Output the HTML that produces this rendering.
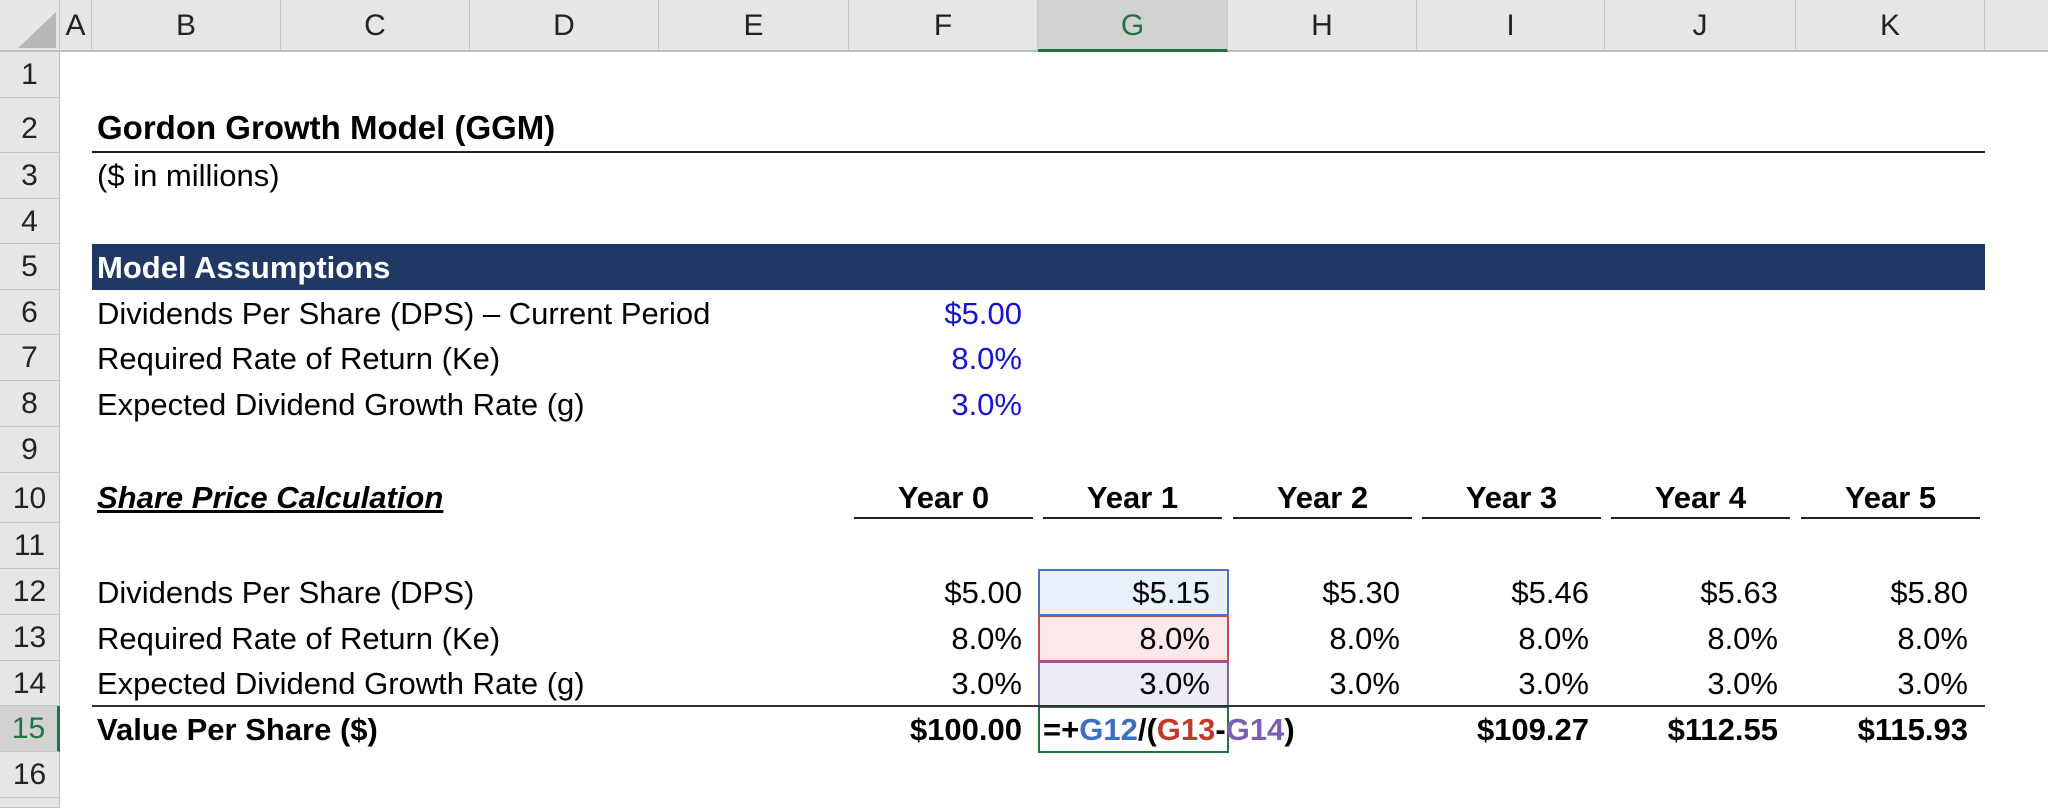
<!DOCTYPE html>
<html><head><meta charset="utf-8"><style>
*{margin:0;padding:0;box-sizing:border-box}
body{width:2048px;height:801px;background:#fff;position:relative;overflow:hidden;font-family:"Liberation Sans",Arial,sans-serif;font-size:31px;color:#000}
.a{position:absolute;white-space:nowrap}
.hd{position:absolute;top:0;height:52px;background:#e6e6e6;border-right:1px solid #c6c6c6;border-bottom:2px solid #bdbdbd;text-align:center;line-height:52px;font-size:30px;color:#222}
.rh{position:absolute;left:0;width:60px;background:#e6e6e6;border-right:1px solid #bdbdbd;border-bottom:1px solid #c6c6c6;text-align:center;font-size:30px;color:#222}
.t{position:absolute;white-space:nowrap;line-height:48px}
.r{text-align:right}
.b{font-weight:bold}
.blue{color:#1414d2}
</style></head><body>
<div class="hd" style="left:0;width:60px"></div>
<svg class="a" style="left:14px;top:10px" width="44" height="40"><polygon points="42,2 42,38 4,38" fill="#b8b8b8"/></svg>
<div class="hd" style="left:60px;width:32px">A</div>
<div class="hd" style="left:92px;width:189px">B</div>
<div class="hd" style="left:281px;width:189px">C</div>
<div class="hd" style="left:470px;width:189px">D</div>
<div class="hd" style="left:659px;width:190px">E</div>
<div class="hd" style="left:849px;width:189px">F</div>
<div class="hd" style="left:1038px;width:190px;background:#d2d2d2;border-bottom:3px solid #217346;color:#217346">G</div>
<div class="hd" style="left:1228px;width:189px">H</div>
<div class="hd" style="left:1417px;width:188px">I</div>
<div class="hd" style="left:1605px;width:191px">J</div>
<div class="hd" style="left:1796px;width:189px">K</div>
<div class="hd" style="left:1985px;width:63px;border-right:none"></div>
<div class="rh" style="top:52px;height:46px;line-height:46px">1</div>
<div class="rh" style="top:98px;height:55px;line-height:62px">2</div>
<div class="rh" style="top:153px;height:46px;line-height:46px">3</div>
<div class="rh" style="top:199px;height:45px;line-height:45px">4</div>
<div class="rh" style="top:244px;height:46px;line-height:46px">5</div>
<div class="rh" style="top:290px;height:45px;line-height:45px">6</div>
<div class="rh" style="top:335px;height:46px;line-height:46px">7</div>
<div class="rh" style="top:381px;height:46px;line-height:46px">8</div>
<div class="rh" style="top:427px;height:46px;line-height:46px">9</div>
<div class="rh" style="top:473px;height:50px;line-height:52px">10</div>
<div class="rh" style="top:523px;height:46px;line-height:46px">11</div>
<div class="rh" style="top:569px;height:46px;line-height:46px">12</div>
<div class="rh" style="top:615px;height:46px;line-height:46px">13</div>
<div class="rh" style="top:661px;height:45px;line-height:45px">14</div>
<div class="rh" style="top:706px;height:46px;line-height:46px;background:#d2d2d2;color:#217346;border-right:3px solid #217346">15</div>
<div class="rh" style="top:752px;height:46px;line-height:46px">16</div>
<div class="rh" style="top:798px;height:10px"></div>

<div class="t b" style="left:97px;top:104px;font-size:33px">Gordon Growth Model (GGM)</div>
<div class="a" style="left:92px;top:151px;width:1893px;height:2px;background:#222"></div>
<div class="t" style="left:97px;top:152px">($ in millions)</div>
<div class="a" style="left:92px;top:244px;width:1893px;height:46px;background:#203864"></div>
<div class="t b" style="left:97px;top:244px;color:#fff">Model Assumptions</div>
<div class="t" style="left:97px;top:290px">Dividends Per Share (DPS) – Current Period</div>
<div class="t" style="left:97px;top:335px">Required Rate of Return (Ke)</div>
<div class="t" style="left:97px;top:381px">Expected Dividend Growth Rate (g)</div>
<div class="t r blue" style="left:849px;width:173px;top:290px">$5.00</div>
<div class="t r blue" style="left:849px;width:173px;top:335px">8.0%</div>
<div class="t r blue" style="left:849px;width:173px;top:381px">3.0%</div>
<div class="t b" style="left:97px;top:474px;font-style:italic;text-decoration:underline">Share Price Calculation</div>
<div class="t b" style="left:854px;width:179px;top:474px;text-align:center">Year 0</div>
<div class="t b" style="left:1043px;width:179px;top:474px;text-align:center">Year 1</div>
<div class="t b" style="left:1233px;width:179px;top:474px;text-align:center">Year 2</div>
<div class="t b" style="left:1422px;width:179px;top:474px;text-align:center">Year 3</div>
<div class="t b" style="left:1611px;width:179px;top:474px;text-align:center">Year 4</div>
<div class="t b" style="left:1801px;width:179px;top:474px;text-align:center">Year 5</div>
<div class="a" style="left:854px;top:517px;width:179px;height:2px;background:#222"></div>
<div class="a" style="left:1043px;top:517px;width:179px;height:2px;background:#222"></div>
<div class="a" style="left:1233px;top:517px;width:179px;height:2px;background:#222"></div>
<div class="a" style="left:1422px;top:517px;width:179px;height:2px;background:#222"></div>
<div class="a" style="left:1611px;top:517px;width:179px;height:2px;background:#222"></div>
<div class="a" style="left:1801px;top:517px;width:179px;height:2px;background:#222"></div>

<div class="a" style="left:1038px;top:569px;width:191px;height:47px;background:#e8f0fa;border:2px solid #4a72c0"></div>
<div class="a" style="left:1038px;top:615px;width:191px;height:47px;background:#fbe9e9;border:2px solid #c0504d"></div>
<div class="a" style="left:1038px;top:661px;width:191px;height:46px;background:#efebf6;border:2px solid #8064a2"></div>
<div class="a" style="left:1038px;top:706px;width:191px;height:47px;border:2px solid #217346"></div>

<div class="t" style="left:97px;top:569px">Dividends Per Share (DPS)</div>
<div class="t" style="left:97px;top:615px">Required Rate of Return (Ke)</div>
<div class="t" style="left:97px;top:660px">Expected Dividend Growth Rate (g)</div>
<div class="a" style="left:92px;top:705px;width:1893px;height:2px;background:#333"></div>
<div class="t b" style="left:97px;top:706px">Value Per Share ($)</div>

<div class="t r" style="left:849px;width:173px;top:569px">$5.00</div>
<div class="t r" style="left:1038px;width:172px;top:569px">$5.15</div>
<div class="t r" style="left:1228px;width:172px;top:569px">$5.30</div>
<div class="t r" style="left:1417px;width:172px;top:569px">$5.46</div>
<div class="t r" style="left:1605px;width:173px;top:569px">$5.63</div>
<div class="t r" style="left:1796px;width:172px;top:569px">$5.80</div>

<div class="t r" style="left:849px;width:173px;top:615px">8.0%</div>
<div class="t r" style="left:1038px;width:172px;top:615px">8.0%</div>
<div class="t r" style="left:1228px;width:172px;top:615px">8.0%</div>
<div class="t r" style="left:1417px;width:172px;top:615px">8.0%</div>
<div class="t r" style="left:1605px;width:173px;top:615px">8.0%</div>
<div class="t r" style="left:1796px;width:172px;top:615px">8.0%</div>

<div class="t r" style="left:849px;width:173px;top:660px">3.0%</div>
<div class="t r" style="left:1038px;width:172px;top:660px">3.0%</div>
<div class="t r" style="left:1228px;width:172px;top:660px">3.0%</div>
<div class="t r" style="left:1417px;width:172px;top:660px">3.0%</div>
<div class="t r" style="left:1605px;width:173px;top:660px">3.0%</div>
<div class="t r" style="left:1796px;width:172px;top:660px">3.0%</div>

<div class="t r b" style="left:849px;width:173px;top:706px">$100.00</div>
<div class="t b" style="left:1043px;top:706px">=+<span style="color:#3a6fc4">G12</span>/(<span style="color:#c0392b">G13</span>-<span style="color:#7a5fb0">G14</span>)</div>
<div class="t r b" style="left:1417px;width:172px;top:706px">$109.27</div>
<div class="t r b" style="left:1605px;width:173px;top:706px">$112.55</div>
<div class="t r b" style="left:1796px;width:172px;top:706px">$115.93</div>
</body></html>
